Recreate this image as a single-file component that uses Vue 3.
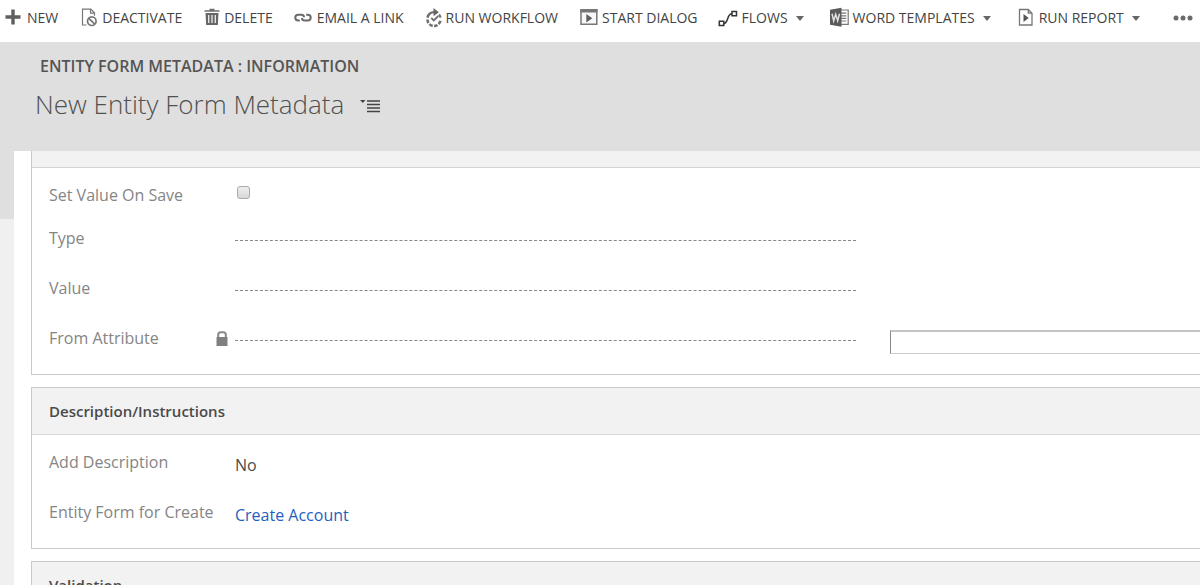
<script setup>
import { ref } from 'vue'

const commands = [
  { id: 'new', label: 'NEW', w: 18 },
  { id: 'deactivate', label: 'DEACTIVATE', w: 18 },
  { id: 'delete', label: 'DELETE', w: 16 },
  { id: 'link', label: 'EMAIL A LINK', w: 18 },
  { id: 'workflow', label: 'RUN WORKFLOW', w: 16 },
  { id: 'dialog', label: 'START DIALOG', w: 18 },
  { id: 'flows', label: 'FLOWS', w: 18, menu: true },
  { id: 'word', label: 'WORD TEMPLATES', w: 19, menu: true },
  { id: 'report', label: 'RUN REPORT', w: 18, menu: true },
]

const saveValue = ref(false)
const type = ref('')
const value = ref('')
const attribute = ref('')
</script>

<template>
  <div class="page">
    <nav class="commands" aria-label="Commands">
      <button v-for="c in commands" :key="c.id" type="button" class="command">
        <svg class="icon" :width="c.w" height="20" :viewBox="`0 0 ${c.w} 20`" aria-hidden="true">
          <path v-if="c.id === 'new'" d="M8 1.500v15M0.500 9h15" stroke="#5f5f5f" stroke-width="3.400" fill="none" />
          <g v-else-if="c.id === 'deactivate'" fill="none" stroke="#777" stroke-width="1.200" transform="translate(1.500 -.5)">
            <path d="M5 17.500H1V1.600h8.300l3.700 3.700v3M9 1.600v4h4" />
            <circle cx="10.300" cy="13.700" r="4.300" stroke-width="1.700" />
            <path d="M7.300 10.800l6 5.800" stroke-width="1.700" />
          </g>
          <g v-else-if="c.id === 'delete'" transform="translate(0 -.5)">
            <path d="M5.500 1.200h5v1.600h5v1.500H.5V2.800h5z" fill="#707070" />
            <path d="M1.500 5.600h13l-.7 12H2.200z" fill="#666" />
            <path d="M4.700 7.500v8M8 7.500v8M11.300 7.500v8" stroke="#ededed" stroke-width="1.300" />
          </g>
          <g v-else-if="c.id === 'link'" fill="none" stroke="#6a6a6a" stroke-width="2" transform="translate(-1)">
            <path d="M5.800 12.500H4.200a2.900 2.900 0 0 1 0-5.800h3.300c1.500 0 2.500.9 2.500 2.500" />
            <path d="M12.200 6.700h1.600a2.900 2.900 0 0 1 0 5.800h-3.300c-1.500 0-2.500-.9-2.500-2.500" />
          </g>
          <g v-else-if="c.id === 'workflow'" fill="none" stroke="#707070">
            <path d="M8.500 4.200a6.500 6.500 0 0 0-7 5.500" stroke-width="2.400" />
            <path d="M1.500 11.500a6.500 6.500 0 0 0 13 0" stroke-width="2.600" stroke-dasharray="3.600 1.400" />
            <path d="M7.500 0l5.300 4.200-5.300 4z" fill="#666" stroke="none" />
            <path d="M13 6.500a6 6 0 0 1 1.500 3.200" stroke-width="2.200" />
            <path d="M5.300 10l2.500 2.500 4.500-4.500" stroke-width="1.800" />
          </g>
          <g v-else-if="c.id === 'dialog'" transform="translate(0 -.5)">
            <path d="M1 2.500h15.800v14.300H1z" fill="#f8f8f8" stroke="#777" stroke-width="1.500" />
            <path d="M.3 1.500h17.200V5H.3z" fill="#777" />
            <path d="M6.300 6.500l6 4.200-6 4.200z" fill="#5f5f5f" />
          </g>
          <g v-else-if="c.id === 'flows'" class="flow-mark" fill="none" stroke="#333" stroke-width="1.500" transform="translate(-1.500 .5)">
            <path d="M.8 12.800h4.500v4.300H.8zM13.500 3h4.500v4.300h-4.500z" />
            <path d="M5.300 15c5 0 2.700-9.700 8.200-9.700" />
          </g>
          <g v-else-if="c.id === 'word'" transform="translate(0 -.5)">
            <path d="M9.500 2.500h8.700v14.300H9.500" fill="#fff" stroke="#777" stroke-width="1.200" />
            <path d="M11 5.700h5.300M11 8.300h5.300M11 10.900h5.300M11 13.500h5.300" stroke="#777" stroke-width="1.200" />
            <path d="M0 2.300L11.500.3v18.900L0 17.200z" fill="#5a5a5a" />
            <path d="M2 6.300l1.700 7 2-6.500 2 6.500 1.800-7" fill="none" stroke="#e0e0e0" stroke-width="1.500" />
          </g>
          <g v-else fill="none" stroke="#777" stroke-width="1.300" transform="translate(1.500 -.5)">
            <path d="M1 2h8.800L13.500 5.700V17.500H1zM9.800 2v3.700h3.700" />
            <path d="M5 6.500l5.200 4-5.200 4z" fill="#555" stroke="none" />
          </g>
        </svg>
        <span>{{ c.label }}</span>
        <span v-if="c.menu" class="caret" aria-hidden="true"></span>
      </button>
      <button type="button" class="command more" aria-label="More commands">
        <svg width="20" height="6" viewBox="0 0 20 6" fill="#6a6a6a" aria-hidden="true">
          <circle cx="3" cy="3" r="2.500" /><circle cx="10" cy="3" r="2.500" /><circle cx="17" cy="3" r="2.500" />
        </svg>
      </button>
    </nav>

    <header class="heading">
      <p class="form-name">ENTITY FORM METADATA : INFORMATION</p>
      <div class="title-row">
        <h1>New Entity Form Metadata</h1>
        <button type="button" class="form-menu" aria-label="Form sections">
          <svg width="20" height="14" viewBox="0 0 20 14" aria-hidden="true">
            <path d="M0 1h5.500L2.800 4z" fill="#444" />
            <path d="M7 2h13M7 5.500h13M7 9h13M7 12.500h13" stroke="#444" stroke-width="1.600" />
          </svg>
        </button>
      </div>
    </header>

    <main class="content">
      <div class="form">
        <section class="panel">
          <div class="panel-strip"></div>
          <div class="fields">
            <div class="field short">
              <label for="save-value">Set Value On Save</label>
              <input id="save-value" v-model="saveValue" type="checkbox" class="check" />
            </div>
            <div class="field">
              <label for="type">Type</label>
              <input id="type" v-model="type" type="text" class="line" />
            </div>
            <div class="field">
              <label for="value">Value</label>
              <input id="value" v-model="value" type="text" class="line" />
            </div>
            <div class="field">
              <label for="attribute">
                From Attribute
                <svg class="lock" width="12" height="15" viewBox="0 0 12 15" aria-hidden="true">
                  <path d="M2.200 7V3.800Q2.200 1.300 4.700 1.300h2.600q2.500 0 2.500 2.500V7" fill="none" stroke="#888" stroke-width="2" />
                  <path d="M.5 6h11v9H.5z" fill="#808083" />
                </svg>
              </label>
              <input id="attribute" v-model="attribute" type="text" class="line" readonly />
              <input type="text" class="box" aria-label="From Attribute detail" />
            </div>
          </div>
        </section>

        <section class="panel">
          <h2>Description/Instructions</h2>
          <div class="fields">
            <div class="field">
              <span class="name">Add Description</span>
              <span class="text">No</span>
            </div>
            <div class="field">
              <span class="name">Entity Form for Create</span>
              <a class="text" href="#">Create Account</a>
            </div>
          </div>
        </section>

        <section class="panel">
          <h2>Validation</h2>
        </section>
      </div>
    </main>
  </div>
</template>

<style>
body {
  margin: 0;
  overflow: hidden;
}
</style>

<style scoped>
.page {
  display: flex;
  flex-direction: column;
  height: 100vh;
  overflow: hidden;
  background: #fff;
  color: #4a4a4a;
  font-family: "Open Sans", "Noto Sans", sans-serif;
  font-size: 16px;
}

button,
input {
  font: inherit;
  color: inherit;
  box-sizing: border-box;
  margin: 0;
  padding: 0;
}

.commands {
  display: flex;
  flex: none;
  gap: 22px;
  height: 42px;
  padding: 0 7px 6px 5px;
  box-sizing: border-box;
  overflow: hidden;
}

.command {
  display: flex;
  flex: none;
  align-items: center;
  gap: 4px;
  border: 0;
  background: none;
  color: #444;
  font-size: 14px;
  line-height: 20px;
  white-space: nowrap;
}

.icon {
  flex: none;
  overflow: visible;
}

.caret {
  margin: 0 4px;
  border: 4px solid transparent;
  border-top: 5px solid #666;
  border-bottom: 0;
}

.more {
  margin-left: auto;
}

.heading {
  flex: none;
  height: 109px;
  padding: 13px 35px 0;
  box-sizing: border-box;
  background: #dfdfdf;
}

.form-name {
  margin: 0 0 0 5px;
  font-size: 16px;
  line-height: 22px;
  font-weight: 600;
  color: #555;
}

.title-row {
  display: flex;
  align-items: center;
  gap: 16px;
  margin-top: 8px;
}

h1 {
  margin: 0;
  font-size: 26px;
  line-height: 38px;
  font-weight: 300;
  color: #505050;
}

.form-menu {
  display: flex;
  padding-top: 4px;
  border: 0;
  background: none;
}

.content {
  flex: 1;
  min-height: 0;
  padding-left: 14px;
  overflow: hidden;
  background: linear-gradient(#dfdfdf 68px, #f0f0f0 68px);
}

.form {
  display: flex;
  flex-direction: column;
  gap: 12px;
  min-height: 100%;
  padding-left: 17px;
  background: #fff;
}

.panel {
  border: 1px solid #c6caca;
  border-right: 0;
}

.panel:first-child {
  border-top: 0;
}

.panel-strip {
  height: 16px;
  background: #f2f2f2;
  border-bottom: 1px solid #d4d4d4;
}

h2 {
  margin: 0;
  padding: 0 17px;
  font-size: 15px;
  line-height: 46px;
  font-weight: 600;
  background: #f2f2f2;
  border-bottom: 1px solid #d8d8d8;
}

.fields {
  display: flex;
  flex-direction: column;
  gap: 26px;
  padding: 15px 0 24px 17px;
}

.field {
  display: grid;
  grid-template-columns: 186px minmax(0, 2fr) 34px minmax(0, 1fr);
  align-items: start;
  height: 24px;
}

.field.short {
  height: 17px;
}

.field label,
.name {
  display: flex;
  justify-content: space-between;
  align-items: center;
  padding-right: 7px;
  line-height: 24px;
  color: #858585;
}

.check {
  appearance: none;
  width: 13px;
  height: 13px;
  margin: 3px 2px;
  border: 1px solid #aaa;
  border-radius: 3px;
  background: linear-gradient(#eee, #d8d8d8);
}

.line {
  height: 15px;
  border: 0;
  border-bottom: 1px dashed #888;
  background: none;
}

.box {
  grid-column: 4;
  height: 24px;
  margin-top: 4px;
  border: 1px solid #888;
  border-top: 2px solid #c4c4c4;
  border-bottom-color: #ccc;
  border-right: 0;
  background: #fff;
}

.text {
  padding-top: 3px;
  line-height: 24px;
}

a.text {
  color: #1f5fbf;
  text-decoration: none;
}
</style>
